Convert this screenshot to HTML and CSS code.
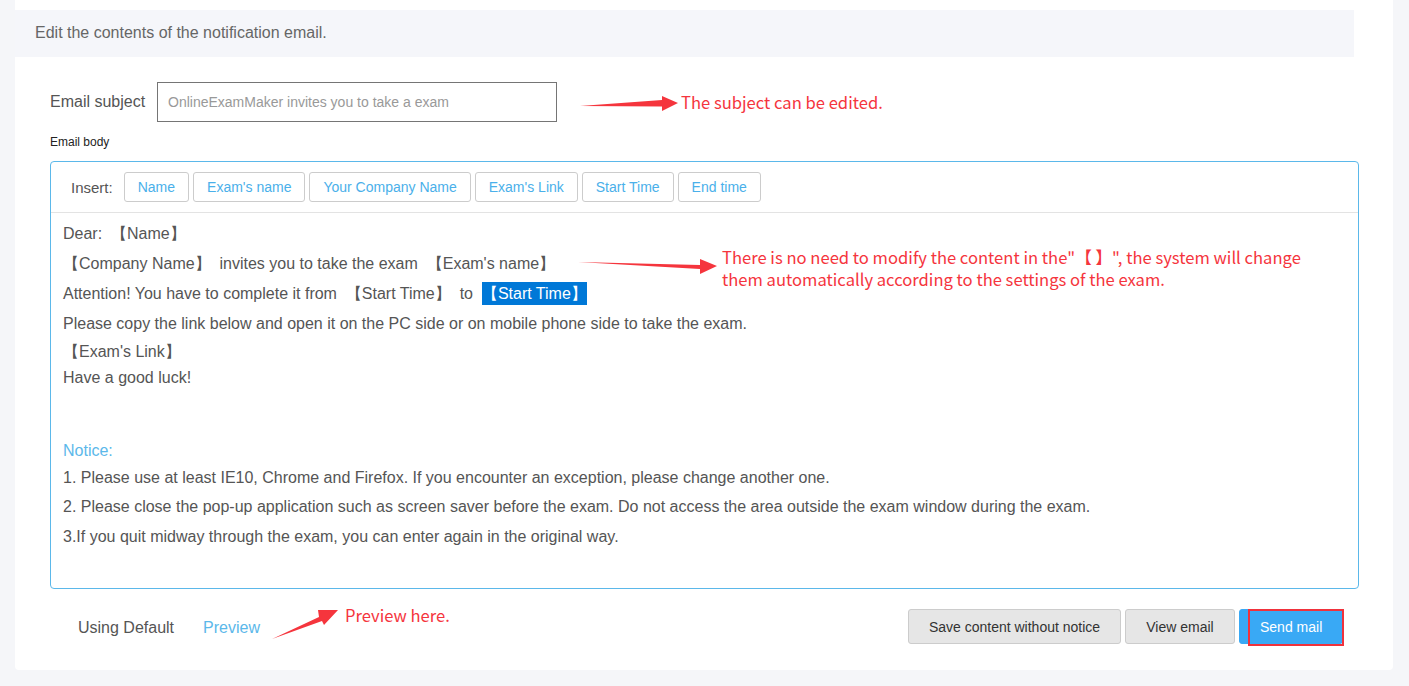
FILE: index.html
```html
<!DOCTYPE html>
<html lang="en">
<head>
    <meta charset="utf-8">
    <title>Notification email</title>
    <link rel="stylesheet" href="styles.css">
</head>
<body>
<div class="m-card">
    <div class="m-title">Edit the contents of the notification email.</div>
    <div class="m-subject">
        <label>Email subject</label>
        <input type="text" class="m-input" placeholder="OnlineExamMaker invites you to take a exam">
    </div>
    <div class="m-bodylabel">Email body</div>
    <div class="m-editor">
        <div class="m-toolbar">
            <span class="m-insert">Insert:</span>
            <button class="m-tag">Name</button>
            <button class="m-tag">Exam's name</button>
            <button class="m-tag">Your Company Name</button>
            <button class="m-tag">Exam's Link</button>
            <button class="m-tag">Start Time</button>
            <button class="m-tag">End time</button>
        </div>
        <div class="m-content">
            <p>Dear: &nbsp;【Name】</p>
            <p>【Company Name】 &nbsp;invites you to take the exam &nbsp;【Exam's name】</p>
            <p>Attention! You have to complete it from &nbsp;【Start Time】 &nbsp;to &nbsp;<span class="m-sel">【Start Time】</span></p>
            <p>Please copy the link below and open it on the PC side or on mobile phone side to take the exam.</p>
            <p class="tight">【Exam's Link】</p>
            <p class="tight">Have a good luck!</p>
            <div class="m-blank"></div>
            <p class="tight m-notice">Notice:</p>
            <p class="mid">1. Please use at least IE10, Chrome and Firefox. If you encounter an exception, please change another one.</p>
            <p>2. Please close the pop-up application such as screen saver before the exam. Do not access the area outside the exam window during the exam.</p>
            <p>3.If you quit midway through the exam, you can enter again in the original way.</p>
        </div>
    </div>
    <div class="m-footer">
        <div class="m-links">
            <a class="m-default">Using Default</a>
            <a class="m-preview">Preview</a>
        </div>
        <div class="m-btns">
            <button class="m-btn">Save content without notice</button>
            <button class="m-btn">View email</button>
            <button class="m-btn m-send">Send mail</button>
        </div>
    </div>

    <!-- annotations -->
    <svg class="m-arrow a1" width="110" height="20" viewBox="0 0 110 20"><polygon points="0,10 82,4 82,0 98,7 82,15 82,10.5" fill="#f5353d"/></svg>
    <div class="m-note n1">The subject can be edited.</div>
    <svg class="m-arrow a2" width="150" height="24" viewBox="0 0 150 24"><polygon points="0,3 122,6 122,0 139,7 122,15 122,10" fill="#f5353d"/></svg>
    <div class="m-note n2">There is no need to modify the content in the"【 】", the system will change<br>them automatically according to the settings of the exam.</div>
    <svg class="m-arrow a3" width="80" height="34" viewBox="0 0 80 34"><polygon points="0,31 47,9 46,2 66,2 52,17 50,13" fill="#f5353d"/></svg>
    <div class="m-note n3">Preview here.</div>
    <div class="m-mark"></div>
</div>
</body>
</html>
```

FILE: styles.css
```css
html{margin: 0; padding: 0;}
body{margin: 0; padding: 0; background: #f5f6f9; font-family: "Liberation Sans", Arial, sans-serif; color: #555;}
.m-card{position: relative; margin-left: 15px; width: 1378px; height: 660px; padding-top: 10px; background: #fff; border-radius: 0 0 4px 4px;}
.m-title{width: 1319px; height: 47px; line-height: 46px; padding-left: 20px; background: #f5f6fa; font-size: 16px; color: #666;}
.m-subject{display: flex; align-items: center; margin-top: 25px; padding-left: 35px;}
.m-subject label{font-size: 16px; color: #555; width: 107px;}
.m-input{box-sizing: border-box; width: 400px; height: 40px; border: 1px solid #757575; padding: 0 10px; font-size: 14px; font-family: inherit; outline: none;}
.m-input::placeholder{color: #999;}
.m-bodylabel{margin: 12px 0 0 35px; font-size: 12px; color: #222; line-height: 16px;}
.m-editor{box-sizing: border-box; margin: 11px 0 0 35px; width: 1309px; height: 428px; border: 1px solid #5bb8ea; border-radius: 4px;}
.m-toolbar{display: flex; align-items: center; gap: 4px; height: 50px; padding-left: 20px; border-bottom: 1px solid #e3e3e3;}
.m-insert{font-size: 15px; color: #555; margin-right: 7px;}
.m-tag{height: 30px; padding: 0 13px; background: #fff; border: 1px solid #ccc; border-radius: 3px; font-family: inherit; font-size: 14px; color: #4ab0ea;}
.m-content{padding: 6px 12px 0 12px; font-size: 16px; color: #555;}
.m-content p{margin: 0; line-height: 30px; white-space: nowrap;}
.m-content p.tight{line-height: 26px;}
.m-content p.mid{line-height: 28px;}
.m-blank{height: 47px;}
.m-notice{color: #5bb8ea;}
.m-sel{background: #0078d7; color: #fff; padding: 3px 0;}
.m-footer{display: flex; justify-content: space-between; align-items: center; margin-top: 20px; padding-left: 63px; width: 1265px;}
.m-links{display: flex; gap: 29px; font-size: 16px; margin-top: 2px;}
.m-default{color: #555;}
.m-preview{color: #5bb8ea;}
.m-btns{display: flex; gap: 4px;}
.m-btn{box-sizing: border-box; height: 35px; padding: 0; background: #e6e6e6; border: 1px solid #ccc; border-radius: 3px; font-family: inherit; font-size: 14px; color: #333; white-space: nowrap;}
.m-btns .m-btn:first-child{width: 213px;}
.m-btns .m-btn:nth-child(2){width: 110px;}
.m-send{width: 104px; background: #39a9f5; border-color: #39a9f5; color: #fff; text-align: left; padding-left: 20px;}
.m-arrow{position: absolute;}
.a1{left: 565px; top: 96px;}
.a2{left: 563px; top: 259px;}
.a3{left: 257px; top: 608px;}
.m-note{position: absolute; font-family: "Noto Sans CJK SC", "Noto Sans", sans-serif; font-size: 16.6px; color: #f5353d; line-height: 22px; white-space: nowrap;}
.n1{left: 666px; top: 91px;}
.n2{left: 707px; top: 246px;}
.n3{left: 330px; top: 604px;}
.m-mark{position: absolute; left: 1233px; top: 609px; width: 92px; height: 33px; border: 2px solid #f0323c;}
```
